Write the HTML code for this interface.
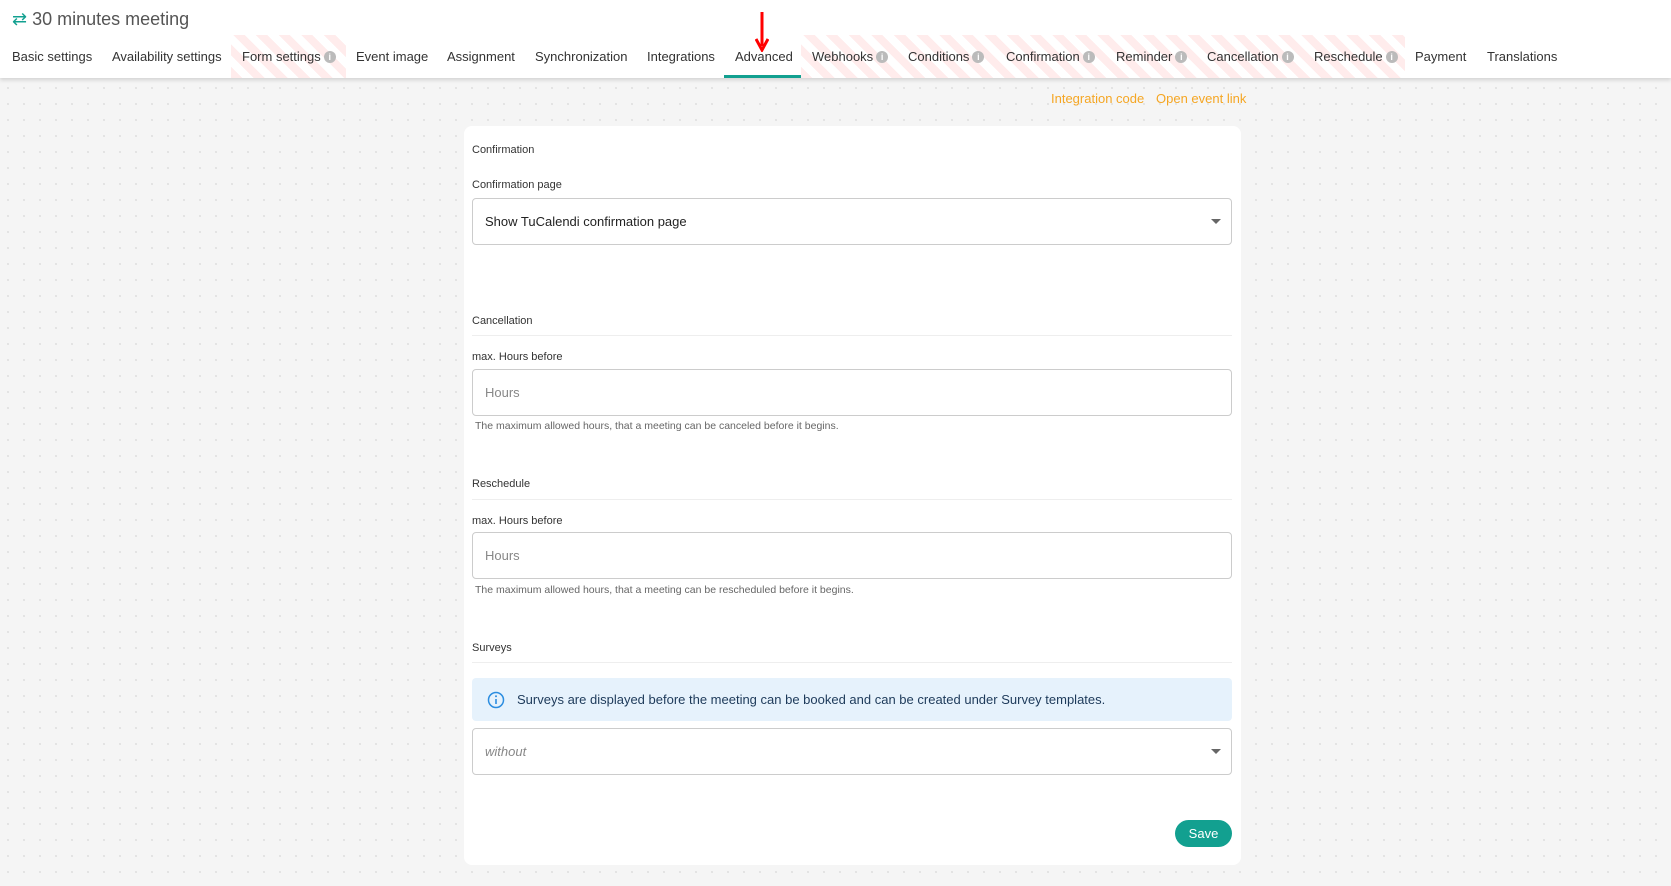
<!DOCTYPE html>
<html><head><meta charset="utf-8"><style>
*{box-sizing:border-box;margin:0;padding:0}
body{width:1671px;height:886px;overflow:hidden;font-family:"Liberation Sans",sans-serif;background-color:#f5f5f5;background-image:radial-gradient(#e2e2e2 1px,transparent 1.2px);background-size:16px 16px;position:relative;color:#333}
.top{position:absolute;left:0;top:0;width:1671px;height:78px;background:#fff;box-shadow:0 2px 4px rgba(0,0,0,.15)}
.title{position:absolute;left:12px;top:9px;font-size:18px;color:#555}
.title b{color:#12a090;font-weight:normal}
.tab{position:absolute;top:49px;font-size:13px;color:#333;white-space:nowrap}
.i{display:inline-block;width:12px;height:12px;border-radius:50%;background:#bbb;color:#fff;font-size:9px;text-align:center;line-height:12px;font-weight:bold;vertical-align:1px;margin-left:3px}
.stripe{position:absolute;top:35px;height:43px;background:repeating-linear-gradient(45deg,rgba(255,200,200,.35) 0 8px,transparent 8px 16px)}
.ul{position:absolute;left:724px;top:75px;width:77px;height:3px;background:#12a090}
.link{position:absolute;top:91px;font-size:13px;color:#f5a623}
.card{position:absolute;left:464px;top:126px;width:777px;height:739px;background:#fff;border-radius:8px}
.abs{position:absolute;left:8px;font-size:11px;color:#333}
.fld{position:absolute;left:8px;width:760px;height:47px;border:1px solid #ccc;border-radius:4px;font-size:13px;padding-left:12px;line-height:45px}
.hr{position:absolute;left:8px;width:760px;height:1px;background:#eee}
.help{position:absolute;left:11px;font-size:10.5px;color:#666}
.car{position:absolute;right:10px;top:20px;border-left:5px solid transparent;border-right:5px solid transparent;border-top:5px solid #666}
</style></head><body>
<div class="top">
<div class="title"><b>⇄</b> 30 minutes meeting</div>
<div class="stripe" style="left:231px;width:115px"></div>
<div class="stripe" style="left:801px;width:604px"></div>
<div class="tab" style="left:12px">Basic settings</div>
<div class="tab" style="left:112px">Availability settings</div>
<div class="tab" style="left:242px">Form settings<span class="i">i</span></div>
<div class="tab" style="left:356px">Event image</div>
<div class="tab" style="left:447px">Assignment</div>
<div class="tab" style="left:535px">Synchronization</div>
<div class="tab" style="left:647px">Integrations</div>
<div class="tab" style="left:735px">Advanced</div>
<div class="tab" style="left:812px">Webhooks<span class="i">i</span></div>
<div class="tab" style="left:908px">Conditions<span class="i">i</span></div>
<div class="tab" style="left:1006px">Confirmation<span class="i">i</span></div>
<div class="tab" style="left:1116px">Reminder<span class="i">i</span></div>
<div class="tab" style="left:1207px">Cancellation<span class="i">i</span></div>
<div class="tab" style="left:1314px">Reschedule<span class="i">i</span></div>
<div class="tab" style="left:1415px">Payment</div>
<div class="tab" style="left:1487px">Translations</div>
<div class="ul"></div>
<svg style="position:absolute;left:755px;top:12px" width="14" height="40"><line x1="7" y1="0" x2="7" y2="34" stroke="#f00" stroke-width="3"/><path d="M1 27 L7 38 L13 27" fill="none" stroke="#f00" stroke-width="3"/></svg>
</div>
<div class="link" style="left:1051px">Integration code</div>
<div class="link" style="left:1156px">Open event link</div>
<div class="card">
<div class="abs" style="top:18px">Confirmation</div>
<div class="abs" style="top:53px">Confirmation page</div>
<div class="fld" style="top:72px;color:#222">Show TuCalendi confirmation page<div class="car"></div></div>
<div class="abs" style="top:189px">Cancellation</div>
<div class="hr" style="top:209px"></div>
<div class="abs" style="top:225px">max. Hours before</div>
<div class="fld" style="top:243px;color:#888">Hours</div>
<div class="help" style="top:294px">The maximum allowed hours, that a meeting can be canceled before it begins.</div>
<div class="abs" style="top:352px">Reschedule</div>
<div class="hr" style="top:373px"></div>
<div class="abs" style="top:389px">max. Hours before</div>
<div class="fld" style="top:406px;color:#888">Hours</div>
<div class="help" style="top:458px">The maximum allowed hours, that a meeting can be rescheduled before it begins.</div>
<div class="abs" style="top:516px">Surveys</div>
<div class="hr" style="top:536px"></div>
<div style="position:absolute;left:8px;top:552px;width:760px;height:43px;background:#e6f2fc;border-radius:4px;font-size:13px;color:#1d3a5a;line-height:43px;padding-left:45px">
<svg style="position:absolute;left:15px;top:13px" width="18" height="18" viewBox="0 0 18 18"><circle cx="9" cy="9" r="7.5" fill="none" stroke="#2b8de0" stroke-width="1.5"/><line x1="9" y1="8" x2="9" y2="13" stroke="#2b8de0" stroke-width="1.6"/><circle cx="9" cy="5.3" r="1" fill="#2b8de0"/></svg>
Surveys are displayed before the meeting can be booked and can be created under Survey templates.</div>
<div class="fld" style="top:602px;color:#888;font-style:italic">without<div class="car"></div></div>
<div style="position:absolute;left:711px;top:694px;width:57px;height:27px;border-radius:14px;background:#12a090;color:#fff;font-size:13px;text-align:center;line-height:27px">Save</div>
</div>
</body></html>
